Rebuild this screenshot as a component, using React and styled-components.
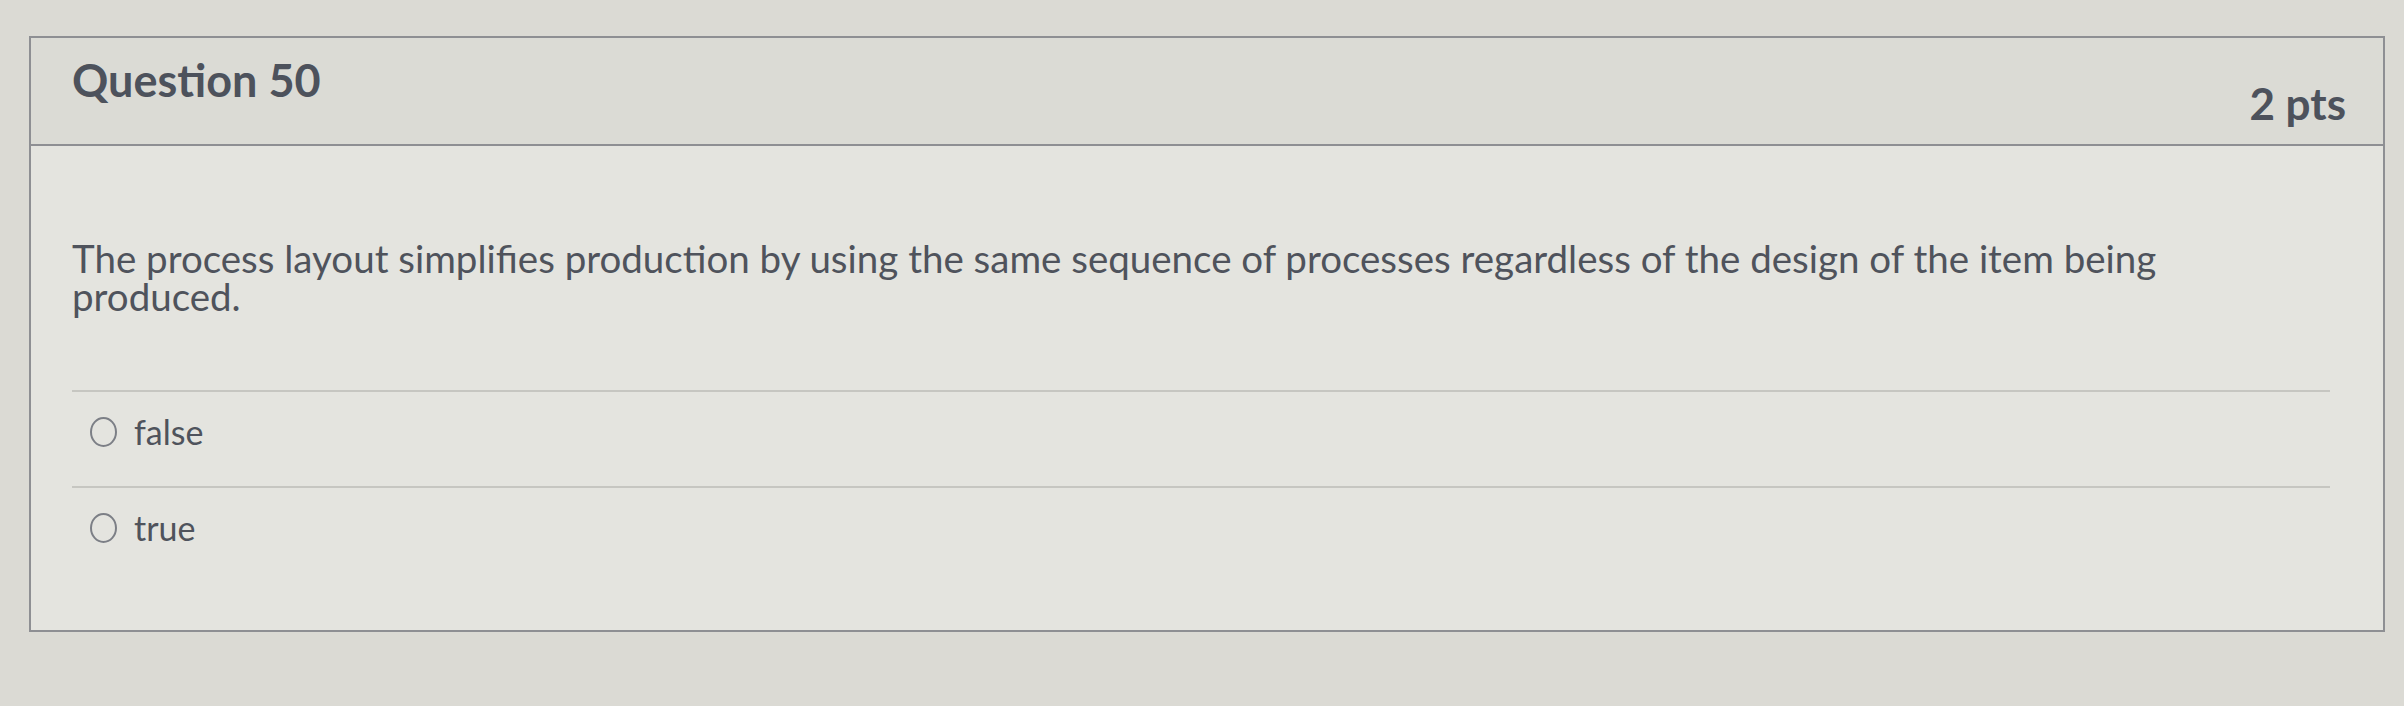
import React from "react";
import styled, { createGlobalStyle } from "styled-components";

const Global = createGlobalStyle`
  html, body { margin: 0; padding: 0; background: #dbdad4; }
  body { font-family: Lato, "Open Sans", "Liberation Sans", sans-serif; }
  * { box-sizing: border-box; }
`;

const Page = styled.div`
  padding: 36px 19px 60px 29px;
`;

const Card = styled.section`
  border: 2px solid #8e8f93;
  background: #e4e4df;
`;

const Header = styled.header`
  height: 108px;
  background: #dbdbd5;
  border-bottom: 2px solid #8e8f93;
  display: flex;
  justify-content: space-between;
  align-items: flex-start;
  padding: 0 37px 0 41px;
`;

const Title = styled.h2`
  margin: 20px 0 0;
  font-size: 45px;
  line-height: 44px;
  font-weight: 700;
  color: #4d525c;
`;

const Points = styled.div`
  margin-top: 43px;
  font-size: 44px;
  line-height: 44px;
  font-weight: 700;
  color: #4d525c;
`;

const Body = styled.div`
  padding: 93px 53px 48px 41px;
`;

const Prompt = styled.p`
  margin: 0;
  max-width: 2200px;
  font-size: 38.5px;
  line-height: 38px;
  color: #4f535c;
`;

const Answers = styled.ul`
  list-style: none;
  margin: 75px 0 0;
  padding: 0;
`;

const Answer = styled.li`
  border-top: 2px solid #c6c6c1;
  padding: 20px 0 34px 18px;
  display: flex;
  align-items: center;
  gap: 17px;
`;

const Radio = styled.span`
  width: 27px;
  height: 30px;
  border: 2px solid #7c7f86;
  border-radius: 50%;
  flex: none;
`;

const Label = styled.span`
  font-size: 34px;
  line-height: 40px;
  color: #4f535c;
`;

export default function App() {
  return (
    <>
      <Global />
      <Page>
        <Card>
          <Header>
            <Title>Question 50</Title>
            <Points>2 pts</Points>
          </Header>
          <Body>
            <Prompt>
              The process layout simplifies production by using the same sequence of processes
              regardless of the design of the item being produced.
            </Prompt>
            <Answers>
              <Answer>
                <Radio />
                <Label>false</Label>
              </Answer>
              <Answer>
                <Radio />
                <Label>true</Label>
              </Answer>
            </Answers>
          </Body>
        </Card>
      </Page>
    </>
  );
}
